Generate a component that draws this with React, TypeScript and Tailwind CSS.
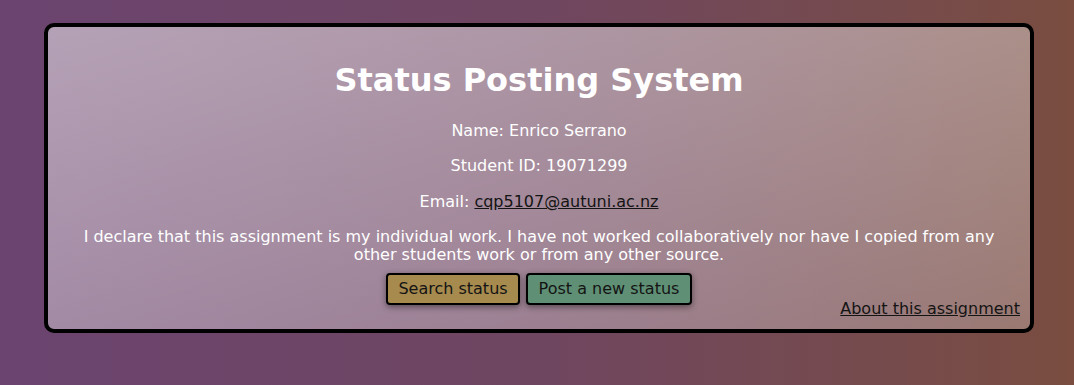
export default function App() {
  return (
    <div className="min-h-[385px] w-full bg-gradient-to-r from-[#6b4470] via-[#6f4660] to-[#7a4d40] pl-[44px] pr-[40px] pt-[23px] pb-[54px] font-['DejaVu_Sans',sans-serif]">
      <div className="rounded-[10px] border-4 border-black bg-gradient-to-br from-white/50 to-white/25 px-[10px] pt-[35px] pb-[11px] text-center text-white">
        <h1 className="text-[32px] font-bold leading-[37px]">Status Posting System</h1>

        <p className="mt-[22px] text-[16px] leading-[19px]">Name: Enrico Serrano</p>
        <p className="mt-[16px] text-[16px] leading-[19px]">Student ID: 19071299</p>
        <p className="mt-[17px] text-[16px] leading-[19px]">
          Email:{' '}
          <a href="#" className="text-[#141414] underline">
            cqp5107@autuni.ac.nz
          </a>
        </p>
        <p className="mx-auto mt-[17px] max-w-[950px] text-[16px] leading-[18px]">
          I declare that this assignment is my individual work. I have not worked collaboratively nor have I copied
          from any other students work or from any other source.
        </p>

        <div className="mt-[9px] grid grid-cols-[1fr_auto_1fr]">
          <div />
          <div className="flex items-start gap-[6px]">
            <button className="h-[32px] w-[134px] rounded-[4px] border-2 border-black bg-[#a68a4e] text-[16px] text-[#141414] shadow-[0_2px_6px_rgba(0,0,0,0.45)]">
              Search status
            </button>
            <button className="h-[32px] w-[166px] rounded-[4px] border-2 border-black bg-[#5f9075] text-[16px] text-[#141414] shadow-[0_2px_6px_rgba(0,0,0,0.45)]">
              Post a new status
            </button>
          </div>
          <div className="flex items-end justify-end pt-[26px]">
            <a href="#" className="text-[16px] leading-[19px] text-[#141414] underline">
              About this assignment
            </a>
          </div>
        </div>
      </div>
    </div>
  );
}
